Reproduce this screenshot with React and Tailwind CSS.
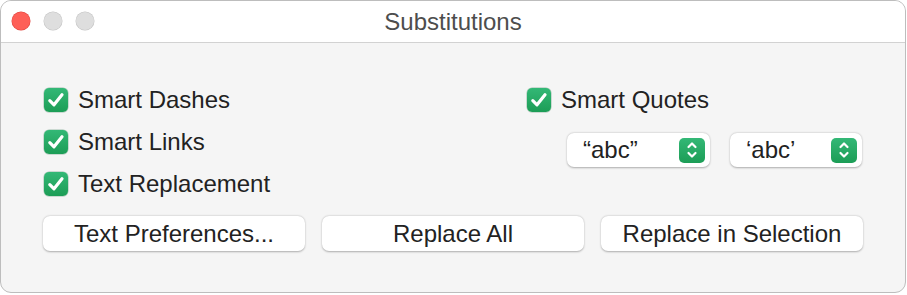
import React from "react";

const font = { fontFamily: '"Liberation Sans", Arial, sans-serif' };

function Check() {
  return (
    <span className="flex h-[24px] w-[24px] shrink-0 items-center justify-center rounded-[5px] bg-gradient-to-b from-[#33b876] to-[#1c9d56] shadow-[0_0_0_0.5px_rgba(0,90,40,0.35)]">
      <svg width="24" height="24" viewBox="0 0 24 24" fill="none">
        <path
          d="M5.8 12.6 L10 16.8 L18 6.8"
          stroke="white"
          strokeWidth="3.2"
          strokeLinecap="round"
          strokeLinejoin="round"
        />
      </svg>
    </span>
  );
}

function CheckRow({ label }) {
  return (
    <div className="flex h-[42px] items-center gap-[10px]">
      <Check />
      <span className="text-[24px] leading-none text-[#222222]">{label}</span>
    </div>
  );
}

function Popup({ label, width }) {
  return (
    <div
      className={`flex h-[34px] items-center justify-between rounded-[7px] bg-white pl-[16px] pr-[5px] shadow-[0_0.5px_2px_rgba(0,0,0,0.3)] ${width}`}
    >
      <span className="text-[24px] leading-none text-[#222222]">{label}</span>
      <span className="flex h-[25px] w-[26px] items-center justify-center rounded-[5px] bg-gradient-to-b from-[#33b876] to-[#1c9d56]">
        <svg width="16" height="22" viewBox="0 0 16 22" fill="none">
          <path
            d="M4.5 8 L8 4.5 L11.5 8 M4.5 14 L8 17.5 L11.5 14"
            stroke="white"
            strokeWidth="2.2"
            strokeLinecap="round"
            strokeLinejoin="round"
          />
        </svg>
      </span>
    </div>
  );
}

function Button({ label }) {
  return (
    <div className="flex h-[35px] w-[262px] items-center justify-center rounded-[7px] bg-white shadow-[0_0.5px_2px_rgba(0,0,0,0.3)]">
      <span className="text-[24px] leading-none text-[#222222]">{label}</span>
    </div>
  );
}

export default function App() {
  return (
    <div className="h-[295px] w-[907px] bg-white" style={font}>
      <div className="h-[293px] w-[906px] overflow-hidden rounded-[11px] border border-[#bdbdbd] bg-[#f5f5f5]">
        {/* title bar */}
        <div className="relative flex h-[42px] items-center justify-center border-b border-[#d2d2d2] bg-white">
          <div className="absolute left-[11px] top-[11px] flex gap-[14px]">
            <span className="h-[18px] w-[18px] rounded-full bg-[#fe5f57] shadow-[0_0_0_0.5px_#e0443e]" />
            <span className="h-[18px] w-[18px] rounded-full bg-[#dedede] shadow-[0_0_0_0.5px_#c4c4c4]" />
            <span className="h-[18px] w-[18px] rounded-full bg-[#dedede] shadow-[0_0_0_0.5px_#c4c4c4]" />
          </div>
          <span className="text-[24px] leading-none text-[#4d4d4d]">Substitutions</span>
        </div>

        {/* body */}
        <div className="pt-[36px]">
          <div className="flex">
            <div className="w-[526px] pl-[43px]">
              <CheckRow label="Smart Dashes" />
              <CheckRow label="Smart Links" />
              <CheckRow label="Text Replacement" />
            </div>
            <div>
              <CheckRow label="Smart Quotes" />
              <div className="ml-[40px] mt-[12px] flex gap-[20px]">
                <Popup label="“abc”" width="w-[143px]" />
                <Popup label="‘abc’" width="w-[132px]" />
              </div>
            </div>
          </div>
          <div className="mt-[11px] flex gap-[17px] pl-[42px]">
            <Button label="Text Preferences..." />
            <Button label="Replace All" />
            <Button label="Replace in Selection" />
          </div>
        </div>
      </div>
    </div>
  );
}
